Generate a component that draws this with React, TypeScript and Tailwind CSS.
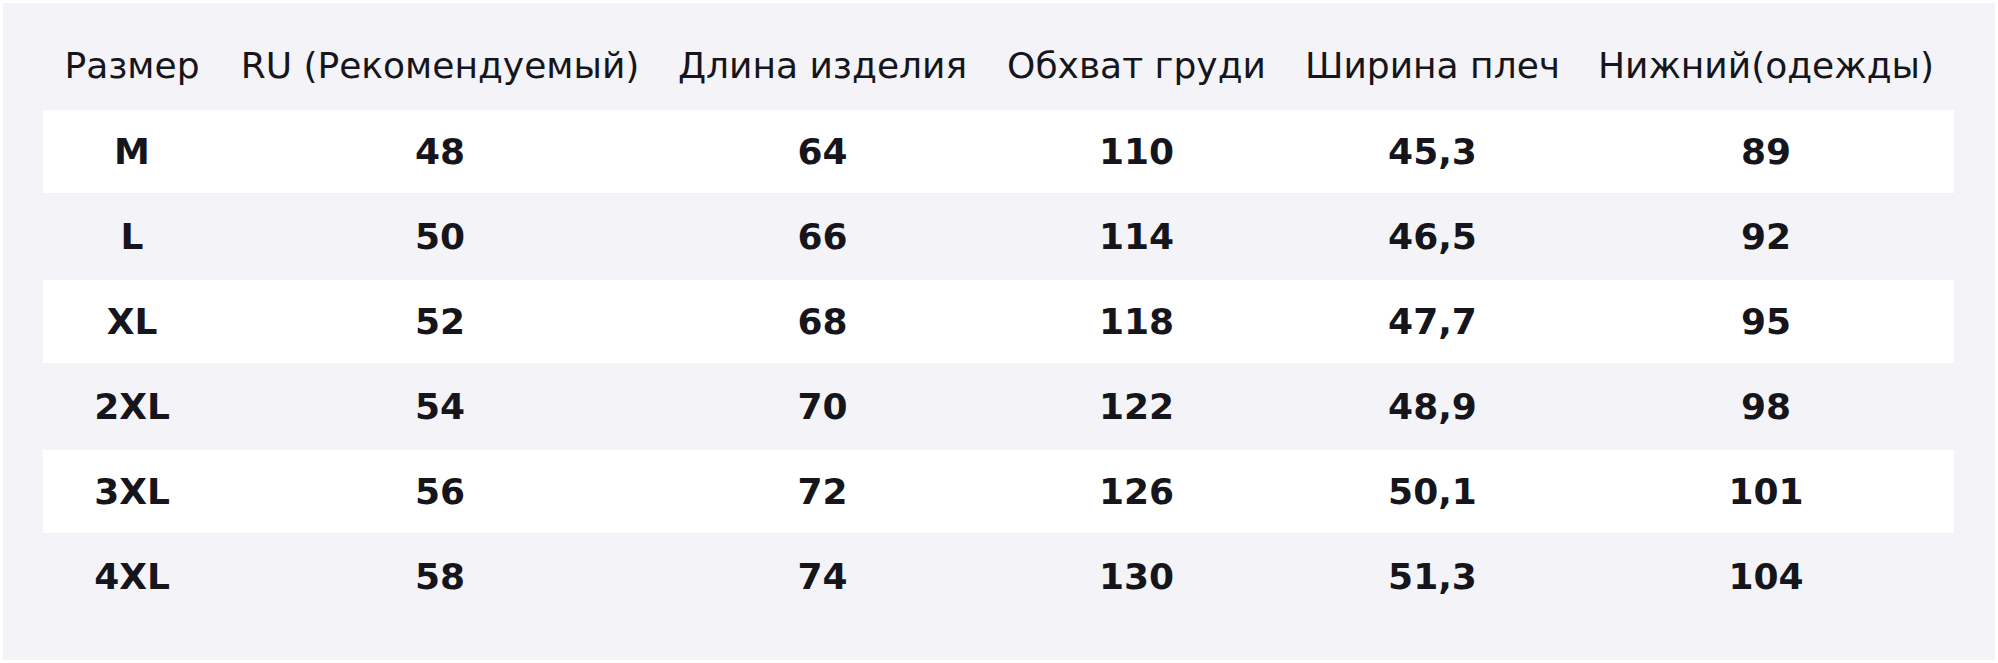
import React from "react";

const headers = [
  "Размер",
  "RU (Рекомендуемый)",
  "Длина изделия",
  "Обхват груди",
  "Ширина плеч",
  "Нижний(одежды)",
];

const rows: string[][] = [
  ["M", "48", "64", "110", "45,3", "89"],
  ["L", "50", "66", "114", "46,5", "92"],
  ["XL", "52", "68", "118", "47,7", "95"],
  ["2XL", "54", "70", "122", "48,9", "98"],
  ["3XL", "56", "72", "126", "50,1", "101"],
  ["4XL", "58", "74", "130", "51,3", "104"],
];

const cols = "grid grid-cols-[178px_438px_327px_301px_291px_376px]";

export default function App() {
  return (
    <div
      className="bg-white p-[3px] w-[1998px] h-[663px]"
      style={{ fontFamily: '"DejaVu Sans", sans-serif' }}
    >
      <div className="bg-[#f3f3f8] h-full px-[40px] pt-[40px] pb-[40px]">
        <div className="flex flex-col gap-[2px] w-[1911px]">
          <div className={`${cols} h-[65px] pt-[2px]`}>
            {headers.map((h) => (
              <div
                key={h}
                className="text-center text-[36px] leading-[42px] text-[#15151b] whitespace-nowrap"
              >
                {h}
              </div>
            ))}
          </div>
          {rows.map((r, i) => (
            <div
              key={r[0]}
              className={`${cols} h-[83px] items-center ${
                i % 2 === 0 ? "bg-white" : "bg-transparent"
              }`}
            >
              {r.map((c, j) => (
                <div
                  key={j}
                  className="text-center text-[36px] leading-[42px] font-bold text-[#15151b] whitespace-nowrap"
                >
                  {c}
                </div>
              ))}
            </div>
          ))}
        </div>
      </div>
    </div>
  );
}
